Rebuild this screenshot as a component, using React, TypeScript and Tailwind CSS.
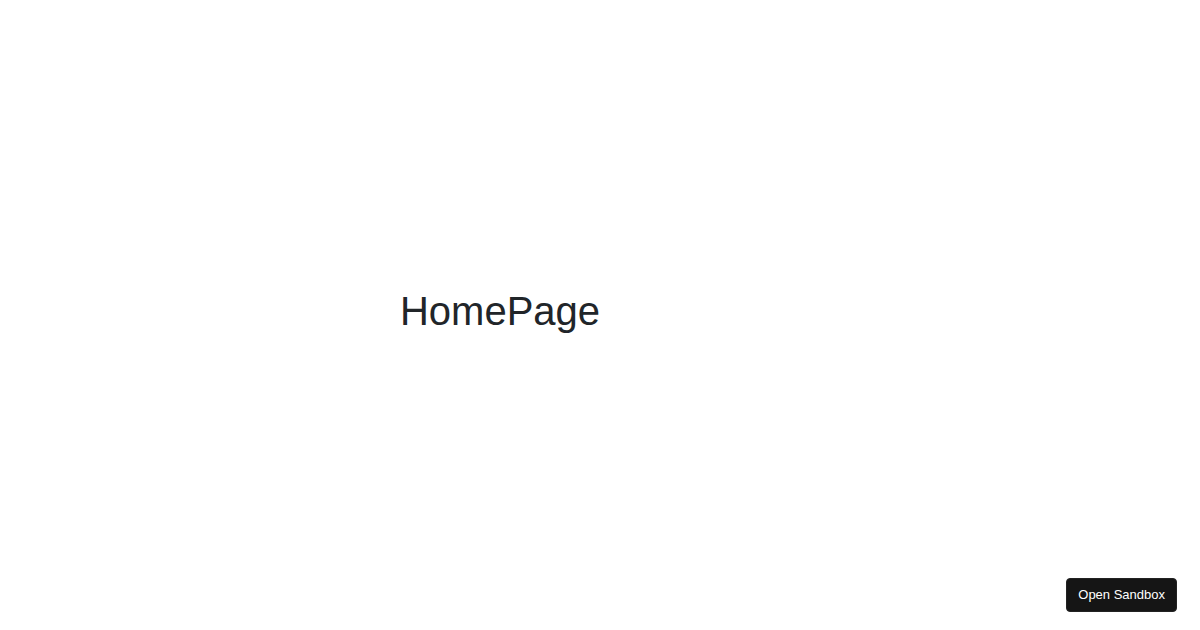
export default function App() {
  return (
    <main className="flex min-h-screen items-center bg-white font-['Liberation_Sans',Arial,sans-serif]">
      <h1 className="mb-2 ml-[33.3333%] text-[40px] leading-12 text-[#212529]">HomePage</h1>
      <button
        type="button"
        className="fixed right-[23px] bottom-[18px] rounded-sm border border-[#222222] bg-[#151515] px-[11px] py-2 text-[13px] leading-4 text-white"
      >
        Open Sandbox
      </button>
    </main>
  );
}
